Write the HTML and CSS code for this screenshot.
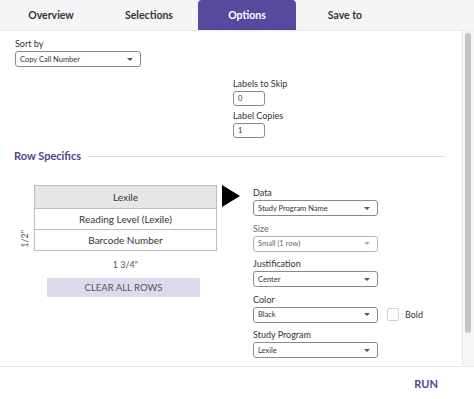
FILE: index.html
```html
<!DOCTYPE html>
<html>
<head>
<meta charset="utf-8">
<link rel="stylesheet" href="styles.css">
</head>
<body>
<div class="app">
  <nav class="tabs">
    <div class="tab">Overview</div>
    <div class="tab">Selections</div>
    <div class="tab active">Options</div>
    <div class="tab">Save to</div>
  </nav>
  <main class="content">
    <div class="inner">
      <div class="field">
        <label class="lbl">Sort by</label>
        <div class="select">Copy Call Number<span class="caret"></span></div>
      </div>
      <div class="counts">
        <div class="field"><label class="lbl">Labels to Skip</label><div class="num">0</div></div>
        <div class="field"><label class="lbl">Label Copies</label><div class="num">1</div></div>
      </div>
      <div class="section-head"><h2 class="section-title">Row Specifics</h2><span class="rule"></span></div>
      <div class="rs">
        <div class="diagram">
          <div class="dim-v">1/2"</div>
          <div class="rows">
            <div class="row sel">Lexile</div>
            <div class="row">Reading Level (Lexile)</div>
            <div class="row">Barcode Number</div>
          </div>
          <div class="dim-h">1 3/4"</div>
          <button class="clear">CLEAR ALL ROWS</button>
        </div>
        <div class="pointer"></div>
        <div class="form">
          <div class="field">
            <label class="lbl">Data</label>
            <div class="select wide">Study Program Name<span class="caret"></span></div>
          </div>
          <div class="field">
            <label class="lbl muted">Size</label>
            <div class="select wide disabled">Small (1 row)<span class="caret"></span></div>
          </div>
          <div class="field">
            <label class="lbl">Justification</label>
            <div class="select wide">Center<span class="caret"></span></div>
          </div>
          <div class="field">
            <label class="lbl">Color</label>
            <div class="inline">
              <div class="select wide">Black<span class="caret"></span></div>
              <span class="check"></span>
              <span class="check-lbl">Bold</span>
            </div>
          </div>
          <div class="field">
            <label class="lbl">Study Program</label>
            <div class="select wide">Lexile<span class="caret"></span></div>
          </div>
        </div>
      </div>
    </div>
    <div class="scrollbar"><div class="thumb"></div></div>
  </main>
  <footer class="foot"><span class="run">RUN</span></footer>
</div>
</body>
</html>
```
FILE: styles.css
```css
* { box-sizing: border-box; }
html, body { margin: 0; height: 100%; }
body {
  font-family: Lato, "Open Sans", sans-serif;
  color: #333;
  background: #fff;
  overflow: hidden;
}
.app { width: 474px; height: 399px; display: flex; flex-direction: column; }

.tabs {
  flex: none;
  height: 31px;
  display: flex;
  padding-left: 2px;
  background: #f5f5f7;
  border-bottom: 1px solid #ececf0;
}
.tab {
  width: 98px;
  display: flex;
  align-items: center;
  justify-content: center;
  font-size: 10.5px;
  font-weight: 700;
  color: #333;
}
.tab.active { background: #574a9e; color: #fff; border-radius: 4px 4px 0 0; }

.content { flex: 1; min-height: 0; display: flex; overflow: hidden; }
.inner { flex: 1; padding: 7px 17px 0 15px; overflow: hidden; }

.scrollbar {
  flex: none;
  width: 12px;
  background: #f6f6f6;
  border-left: 1px solid #e6e6e6;
  padding: 2px 3px 0 2px;
}
.thumb { height: 300px; background: #c4c4c4; border-radius: 3px; }

.field { display: flex; flex-direction: column; }
.lbl { display: block; font-size: 9px; line-height: 12px; color: #333; margin-bottom: 1px; }
.lbl.muted { color: #666; }

.select {
  width: 126px;
  height: 16px;
  border: 1px solid #8a8a8a;
  border-radius: 3px;
  padding: 0 7px 0 4px;
  font-size: 7.5px;
  color: #333;
  display: flex;
  align-items: center;
}
.select.wide { width: 125px; }
.caret {
  margin-left: auto;
  width: 0; height: 0;
  border-left: 3px solid transparent;
  border-right: 3px solid transparent;
  border-top: 3px solid #555;
}
.select.disabled { border-color: #b3b3b3; color: #666; }
.select.disabled .caret { border-top-color: #b0b0b0; }

.counts { margin: 11px 0 0 218px; display: flex; flex-direction: column; gap: 4px; }
.num {
  width: 32px; height: 15px;
  border: 1px solid #8a8a8a;
  border-radius: 3px;
  padding-left: 4px;
  font-size: 7.5px;
  display: flex; align-items: center;
}

.section-head { margin-top: 11px; display: flex; align-items: center; margin-left: -1px; }
.section-title { margin: 0; font-size: 11px; line-height: 14px; font-weight: 700; color: #4f4393; }
.rule { flex: 1; height: 1px; background: #dcdce4; margin-left: 7px; }

.rs { margin-top: 22px; display: flex; align-items: flex-start; }
.diagram { display: grid; grid-template-columns: 19px 183px; }
.dim-v {
  grid-column: 1; grid-row: 1;
  align-self: end; justify-self: center;
  writing-mode: vertical-rl;
  transform: rotate(180deg);
  font-size: 9px;
  color: #555;
  margin-bottom: 3px;
}
.rows { grid-column: 2; grid-row: 1; border: 1px solid #bdbdbd; }
.row {
  height: 21px;
  display: flex; align-items: center; justify-content: center;
  font-size: 10px;
  color: #333;
}
.row + .row { border-top: 1px solid #bdbdbd; }
.row.sel { height: 22px; background: #e6e6e6; }
.dim-h { grid-column: 2; text-align: center; font-size: 9px; line-height: 12px; color: #555; margin-top: 8px; }
.clear {
  grid-column: 2;
  justify-self: start;
  margin: 7px 0 0 13px;
  width: 153px; height: 19px;
  border: none;
  background: #dcdbeb;
  color: #555;
  font-family: inherit;
  font-size: 9.5px;
  padding: 0;
}

.pointer {
  flex: none;
  margin-left: 5px;
  width: 0; height: 0;
  border-top: 11.5px solid transparent;
  border-bottom: 11.5px solid transparent;
  border-left: 18px solid #000;
}
.form { margin: 2px 0 0 13px; display: flex; flex-direction: column; gap: 6.5px; }
.inline { display: flex; align-items: center; }
.check {
  width: 12px; height: 13px;
  border: 1px solid #cfcfcf;
  border-radius: 2px;
  margin-left: 9px;
}
.check-lbl { font-size: 9px; margin-left: 6px; color: #333; }

.foot {
  flex: none;
  height: 33px;
  border-top: 1px solid #e6e6e6;
  display: flex;
  align-items: center;
  justify-content: flex-end;
  padding-right: 36px;
}
.run { font-size: 11px; font-weight: 700; color: #4f4596; }
```
